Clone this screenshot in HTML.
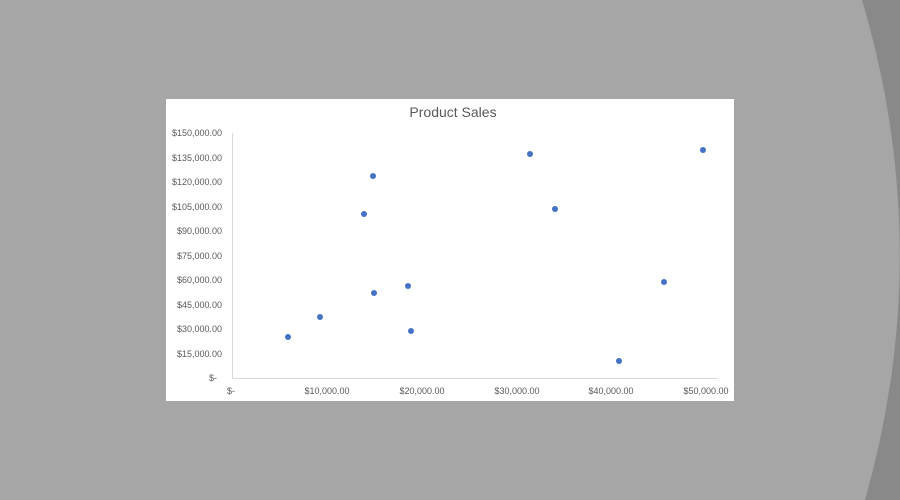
<!DOCTYPE html>
<html><head><style>
html,body{margin:0;padding:0;width:900px;height:500px;overflow:hidden;background:#a6a6a6;}
svg{display:block;}
text{font-family:"Liberation Sans",sans-serif;fill:#595959;}
</style></head><body>
<svg width="900" height="500" viewBox="0 0 900 500">
<rect width="900" height="500" fill="#a6a6a6"/>
<path d="M862,0 Q936,250 865,500 L900,500 L900,0 Z" fill="#898989"/>
<rect x="166" y="99" width="568" height="302" fill="#fff"/>
<text x="453" y="117" font-size="14" text-anchor="middle">Product Sales</text>
<line x1="232.5" y1="133" x2="232.5" y2="378" stroke="#d9d9d9" stroke-width="1"/>
<line x1="232" y1="378.5" x2="718" y2="378.5" stroke="#d9d9d9" stroke-width="1"/>
<g font-size="9" text-anchor="end">
<text x="222" y="136">$150,000.00</text>
<text x="222" y="161">$135,000.00</text>
<text x="222" y="185">$120,000.00</text>
<text x="222" y="210">$105,000.00</text>
<text x="222" y="234">$90,000.00</text>
<text x="222" y="259">$75,000.00</text>
<text x="222" y="283">$60,000.00</text>
<text x="222" y="308">$45,000.00</text>
<text x="222" y="332">$30,000.00</text>
<text x="222" y="357">$15,000.00</text>
<text x="217" y="381">$-</text>
</g>
<g font-size="9" text-anchor="middle">
<text x="231" y="394">$-</text>
<text x="327" y="394">$10,000.00</text>
<text x="422" y="394">$20,000.00</text>
<text x="517" y="394">$30,000.00</text>
<text x="611" y="394">$40,000.00</text>
<text x="706" y="394">$50,000.00</text>
</g>
<g fill="#4472c4">
<circle cx="288" cy="337" r="3"/>
<circle cx="320" cy="317" r="3"/>
<circle cx="364" cy="214" r="3"/>
<circle cx="373" cy="176" r="3"/>
<circle cx="374" cy="293" r="3"/>
<circle cx="408" cy="286" r="3"/>
<circle cx="411" cy="331" r="3"/>
<circle cx="530" cy="154" r="3"/>
<circle cx="555" cy="209" r="3"/>
<circle cx="619" cy="361" r="3"/>
<circle cx="664" cy="282" r="3"/>
<circle cx="703" cy="150" r="3"/>
</g>
</svg>
</body></html>
